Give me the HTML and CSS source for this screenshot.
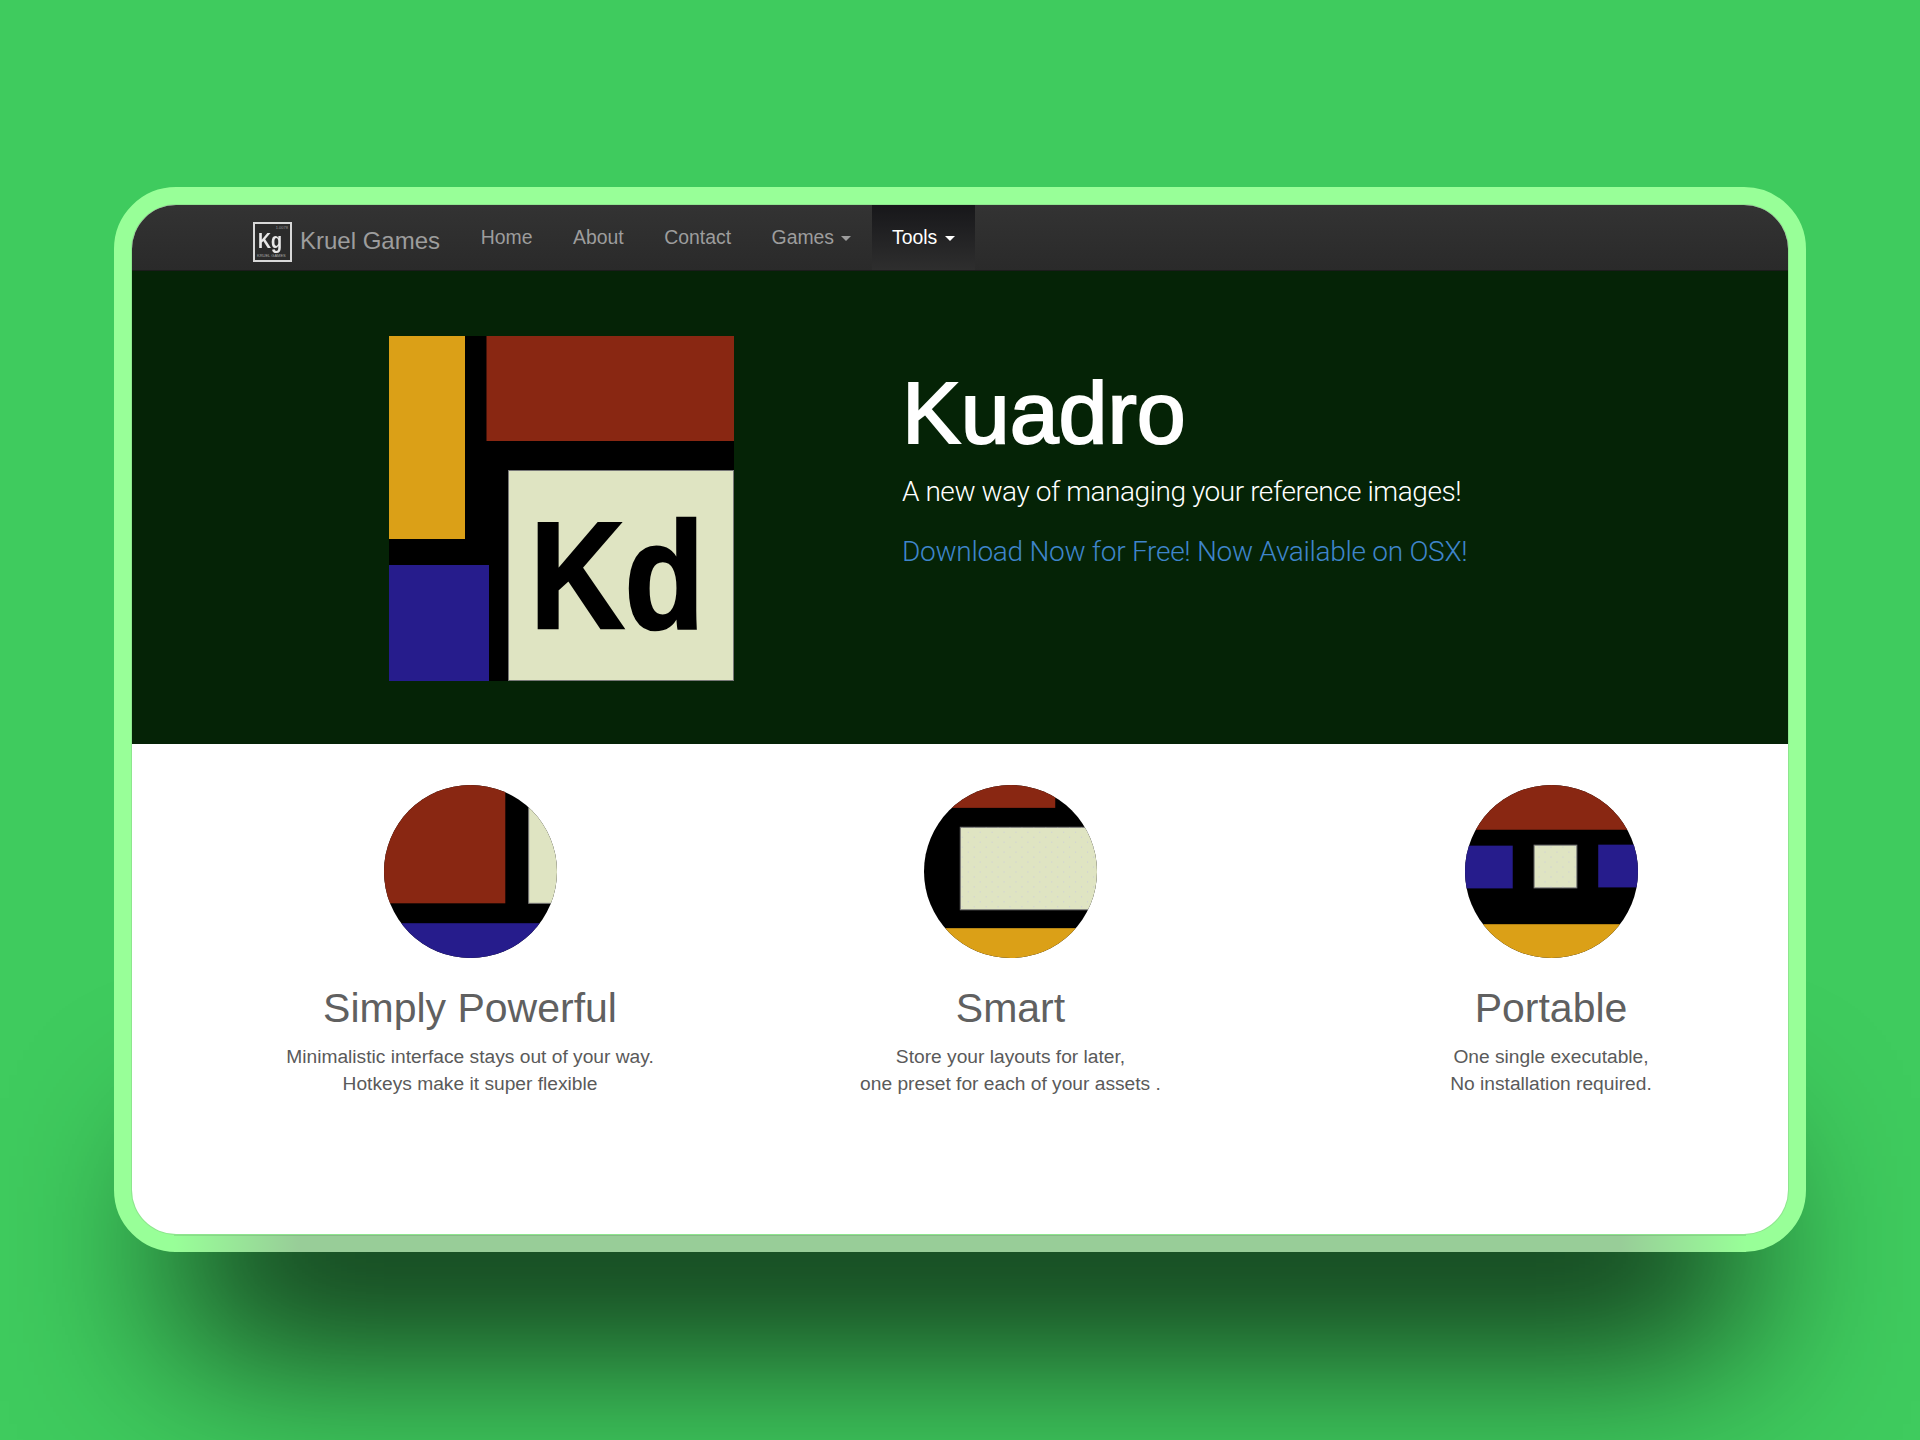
FILE: index.html
```html
<!DOCTYPE html>
<html lang="en">
<head>
    <meta charset="UTF-8">
    <meta name="viewport" content="width=device-width, initial-scale=1.0">
    <title>Kuadro - Kruel Games</title>
    <link rel="stylesheet" href="styles.css">
</head>
<body>
    <div class="frame">
        <div class="frame-shade"></div>
        <div class="page">
            <!-- Navbar -->
            <nav class="navbar">
                <a class="brand" href="#">
                    <span class="brand-logo">
                        <span class="brand-num">1.0078</span>
                        <span class="brand-symbol">Kg</span>
                        <span class="brand-name">KRUEL GAMES</span>
                    </span>
                    Kruel Games
                </a>
                <ul class="nav-links">
                    <li><a href="#">Home</a></li>
                    <li><a href="#">About</a></li>
                    <li><a href="#">Contact</a></li>
                    <li><a href="#">Games <span class="caret"></span></a></li>
                    <li class="active"><a href="#">Tools <span class="caret"></span></a></li>
                </ul>
            </nav>

            <!-- Hero -->
            <section class="hero">
                <svg class="hero-logo" viewBox="0 0 345 345" width="345" height="345">
                    <rect width="345" height="345" fill="#000"/>
                    <rect class="yellow" x="0" y="0" width="76" height="203"/>
                    <rect class="red" x="97.5" y="0" width="247.5" height="105"/>
                    <rect class="blue" x="0" y="229" width="100" height="116"/>
                    <rect class="cream" x="119.5" y="134.5" width="225" height="210"/>
                    <text class="logo-text" transform="translate(141 291.5) scale(0.86 1)">Kd</text>
                </svg>
                <div class="hero-text">
                    <h1>Kuadro</h1>
                    <p class="lead">A new way of managing your reference images!</p>
                    <p class="lead"><a href="#">Download Now for Free! Now Available on OSX!</a></p>
                </div>
            </section>

            <!-- Features -->
            <section class="features">
                <div class="feature">
                    <svg class="circle" viewBox="0 0 174 174" width="173" height="173">
                        <defs>
                            <pattern id="dots" width="12" height="10" patternUnits="userSpaceOnUse">
                                <rect class="dot" x="2" y="2" width="1" height="1"/>
                                <rect class="dot" x="8" y="7" width="1" height="1"/>
                            </pattern>
                        </defs>
                        <rect width="174" height="174" fill="#000"/>
                        <rect class="red" x="0" y="0" width="122" height="119"/>
                        <rect class="cream" x="145.5" y="-5" width="40" height="124"/>
                        <rect class="blue" x="0" y="139" width="174" height="35"/>
                    </svg>
                    <h2>Simply Powerful</h2>
                    <p>Minimalistic interface stays out of your way.<br>Hotkeys make it super flexible</p>
                </div>
                <div class="feature">
                    <svg class="circle" viewBox="0 0 174 174" width="173" height="173">
                        <rect width="174" height="174" fill="#000"/>
                        <rect class="red" x="0" y="0" width="132" height="23"/>
                        <rect class="cream" x="36.5" y="42.5" width="150" height="83"/>
                        <rect x="37" y="43" width="138" height="82" fill="url(#dots)"/>
                        <rect class="yellow" x="0" y="144" width="174" height="30"/>
                    </svg>
                    <h2>Smart</h2>
                    <p>Store your layouts for later,<br>one preset for each of your assets .</p>
                </div>
                <div class="feature">
                    <svg class="circle" viewBox="0 0 174 174" width="173" height="173">
                        <rect width="174" height="174" fill="#000"/>
                        <rect class="red" x="0" y="0" width="174" height="45"/>
                        <rect class="blue" x="0" y="61" width="48" height="43"/>
                        <rect class="cream" x="69.5" y="60.5" width="43" height="43"/>
                        <rect x="70" y="61" width="42" height="42" fill="url(#dots)"/>
                        <rect class="blue" x="134" y="60" width="40" height="43"/>
                        <rect class="yellow" x="0" y="140" width="174" height="34"/>
                    </svg>
                    <h2>Portable</h2>
                    <p>One single executable,<br>No installation required.</p>
                </div>
            </section>
        </div>
    </div>
</body>
</html>
```

FILE: styles.css
```css
body {
    margin: 0;
    height: 1440px;
    overflow: hidden;
    padding: 187px 114px 0;
    box-sizing: border-box;
    background-color: #3fcb5e;
    font-family: "Liberation Sans", Arial, sans-serif;
    color: #5a5a5a;
}
a {
    text-decoration: none;
}
.frame {
    position: relative;
    height: 1065px;
    box-sizing: border-box;
    border: 18px solid #98ff98;
    border-radius: 62px;
}
/* soft shadow below the frame only, not along its sides */
.frame::before {
    content: '';
    position: absolute;
    z-index: -1;
    left: 50px;
    right: 50px;
    top: 950px;
    bottom: -110px;
    background-color: rgba(0, 0, 0, 0.8);
    filter: blur(85px);
}
/* the shadow falls over the lower border */
.frame-shade {
    position: absolute;
    left: 42px;
    right: 42px;
    bottom: -18px;
    height: 18px;
    border-top: 2px solid rgba(0, 0, 0, 0.1);
    box-sizing: border-box;
    background: linear-gradient(to right, #98ff98, #98cd98 8%, #98cd98 92%, #98ff98);
}
.page {
    position: relative;
    height: 100%;
    overflow: hidden;
    border-radius: 44px;
    background-color: #fff;
    box-shadow: 0 0 0 1px #8ee68e;
}

/* Navbar */
.navbar {
    display: flex;
    height: 66px;
    box-sizing: border-box;
    padding-left: 121px;
    border-bottom: 1px solid #1c1c1c;
    background: linear-gradient(to bottom, #333, #2a2a2a);
}
.brand {
    display: flex;
    align-items: center;
    gap: 8px;
    padding-top: 6px;
    box-sizing: border-box;
    font-size: 24px;
    color: #9d9d9d;
}
.brand-logo {
    position: relative;
    width: 39px;
    height: 40px;
    margin-top: 3px;
    box-sizing: border-box;
    border: 2px solid #d8d8d8;
    background-color: #2b2b2b;
    color: #e8e8e8;
}
.brand-symbol {
    position: absolute;
    left: 3px;
    top: 6px;
    font-size: 22px;
    font-weight: bold;
    line-height: 22px;
    transform: scaleX(0.82);
    transform-origin: left;
}
.brand-num {
    position: absolute;
    right: 2px;
    top: 2px;
    font-size: 4px;
    line-height: 4px;
    color: #999;
}
.brand-name {
    position: absolute;
    left: 2px;
    bottom: 2px;
    font-size: 4px;
    line-height: 4px;
    white-space: nowrap;
    color: #aaa;
}
.nav-links {
    display: flex;
    margin: 0 0 0 20.5px;
    padding: 0;
    list-style: none;
}
.nav-links a {
    display: block;
    padding: 0 20.25px;
    line-height: 65px;
    font-size: 19.4px;
    color: #9d9d9d;
}
.nav-links .active a {
    color: #fff;
    background: linear-gradient(to bottom, #17171a, #2e2e2e);
}
.caret {
    display: inline-block;
    margin-left: 2px;
    vertical-align: middle;
    border-top: 5px solid;
    border-left: 5px solid transparent;
    border-right: 5px solid transparent;
}

/* Hero */
.hero {
    display: flex;
    height: 473px;
    box-sizing: border-box;
    padding: 65px 0 0 257px;
    gap: 168px;
    background-color: #052306;
    color: #fff;
}
.yellow {
    fill: #dba017;
}
.red {
    fill: #892712;
}
.blue {
    fill: #261c8c;
}
.cream {
    fill: #dfe4c2;
    stroke: #777;
    stroke-width: 1;
}
.dot {
    fill: #c9c9dc;
}
.logo-text {
    font-family: "Liberation Sans", Arial, sans-serif;
    font-size: 152px;
    font-weight: bold;
    fill: #000;
    stroke: #000;
    stroke-width: 2.5;
}
.hero-text h1 {
    margin: 29px 0 0;
    font-size: 88px;
    font-weight: normal;
    line-height: 96px;
    -webkit-text-stroke: 2px #fff;
}
.lead {
    margin: 0 0 28px;
    font-family: Roboto, "Liberation Sans", sans-serif;
    font-size: 28px;
    font-weight: 300;
    line-height: 32px;
    letter-spacing: -0.45px;
}
.hero-text h1 + .lead {
    margin-top: 15px;
}
.lead a {
    letter-spacing: -0.28px;
    color: #3f85cb;
}

/* Features */
.features {
    display: grid;
    grid-template-columns: 400px 400px 400px;
    column-gap: 140.5px;
    padding: 41px 0 0 138px;
}
.feature {
    text-align: center;
}
.circle {
    display: block;
    margin: 0 auto;
    border-radius: 50%;
}
.feature h2 {
    margin: 25px 0 0;
    font-size: 41px;
    font-weight: normal;
    line-height: 50px;
    color: #606060;
}
.feature p {
    margin: 10px 0 0;
    font-size: 19.2px;
    line-height: 27px;
}
```
